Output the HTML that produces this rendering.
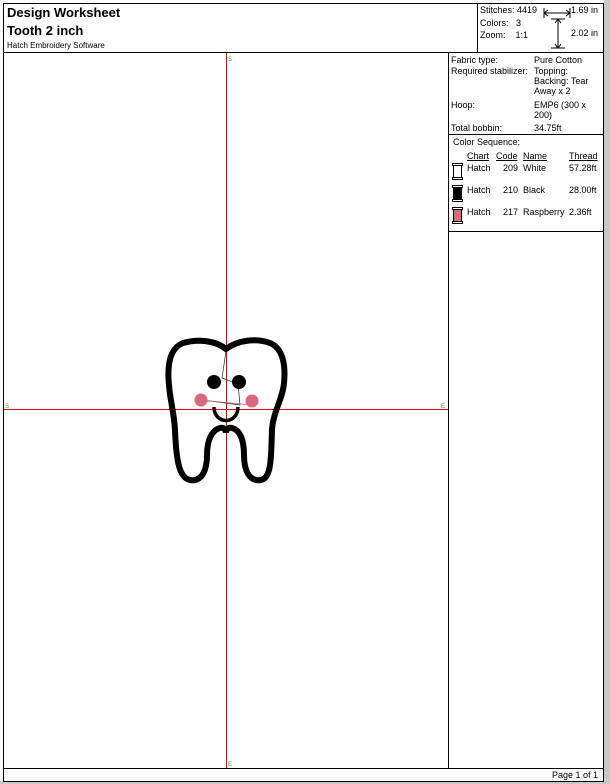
<!DOCTYPE html>
<html><head><style>
body{margin:0;width:610px;height:784px;background:#fff;font-family:"Liberation Sans",sans-serif;position:relative;overflow:hidden}
.a{position:absolute}
.t{font-size:9px;color:#000;white-space:nowrap}
</style></head><body>
<div class="a" style="left:604px;top:0;width:6px;height:784px;background:#c8c8c8"></div>
<div class="a" style="left:0;top:781px;width:610px;height:3px;background:#c8c8c8"></div>
<div class="a" style="left:3px;top:3px;width:599px;height:777px;border:1px solid #000"></div>
<div class="a" style="left:4px;top:52px;width:599px;height:1px;background:#000"></div>
<div class="a" style="left:477px;top:4px;width:1px;height:48px;background:#000"></div>
<div class="a" style="left:448px;top:53px;width:1px;height:715px;background:#000"></div>
<div class="a" style="left:449px;top:134px;width:154px;height:1px;background:#000"></div>
<div class="a" style="left:449px;top:231px;width:154px;height:1px;background:#000"></div>
<div class="a" style="left:4px;top:768px;width:599px;height:1px;background:#000"></div>
<div class="a" style="left:7px;top:5px;font-size:13px;font-weight:bold">Design Worksheet</div>
<div class="a" style="left:7px;top:23px;font-size:13px;font-weight:bold">Tooth 2 inch</div>
<div class="a t" style="left:7px;top:41px;font-size:8px">Hatch Embroidery Software</div>
<div class="a t" style="left:480px;top:5px">Stitches: 4419</div>
<div class="a t" style="left:480px;top:18px">Colors:&nbsp;&nbsp; 3</div>
<div class="a t" style="left:480px;top:30px">Zoom:&nbsp;&nbsp;&nbsp; 1:1</div>
<div class="a t" style="left:571px;top:5px">1.69 in</div>
<div class="a t" style="left:571px;top:28px">2.02 in</div>
<svg class="a" style="left:540px;top:4px" width="32" height="46"><g stroke="#000" fill="none" stroke-width="1"><path d="M4 4V14M30 4V14M4 9H30M4 9l4-3M4 9l4 3M30 9l-4-3M30 9l-4 3"/><path d="M11 15H25M11 44H25M18 15V44M18 15l-3 4M18 15l3 4M18 44l-3-4M18 44l3-4"/></g></svg>
<div class="a t" style="left:451px;top:55px">Fabric type:</div><div class="a t" style="left:534px;top:55px">Pure Cotton</div>
<div class="a t" style="left:451px;top:66px">Required stabilizer:</div>
<div class="a t" style="left:534px;top:66px;line-height:10px">Topping:<br>Backing: Tear<br>Away x 2</div>
<div class="a t" style="left:451px;top:100px">Hoop:</div>
<div class="a t" style="left:534px;top:100px;line-height:10px">EMP6 (300 x<br>200)</div>
<div class="a t" style="left:451px;top:123px">Total bobbin:</div><div class="a t" style="left:534px;top:123px">34.75ft</div>
<div class="a t" style="left:453px;top:137px">Color Sequence:</div>
<div class="a t" style="left:467px;top:151px;text-decoration:underline">Chart</div>
<div class="a t" style="left:496px;top:151px;text-decoration:underline">Code</div>
<div class="a t" style="left:523px;top:151px;text-decoration:underline">Name</div>
<div class="a t" style="left:569px;top:151px;text-decoration:underline">Thread</div>
<div class="a t" style="left:467px;top:163px">Hatch</div><div class="a t" style="left:503px;top:163px">209</div><div class="a t" style="left:523px;top:163px">White</div><div class="a t" style="left:569px;top:163px">57.28ft</div>
<div class="a t" style="left:467px;top:185px">Hatch</div><div class="a t" style="left:503px;top:185px">210</div><div class="a t" style="left:523px;top:185px">Black</div><div class="a t" style="left:569px;top:185px">28.00ft</div>
<div class="a t" style="left:467px;top:207px">Hatch</div><div class="a t" style="left:503px;top:207px">217</div><div class="a t" style="left:523px;top:207px">Raspberry</div><div class="a t" style="left:569px;top:207px">2.36ft</div>
<svg class="a" style="left:450px;top:160px" width="16" height="70"><g stroke="#000" stroke-width="1">
<rect x="2.5" y="3.5" width="10" height="2" fill="#fff"/><rect x="3.5" y="5.5" width="8" height="12" fill="#fff"/><rect x="2.5" y="17.5" width="10" height="2" fill="#fff"/>
<rect x="2.5" y="25.5" width="10" height="2" fill="#fff"/><rect x="3.5" y="27.5" width="8" height="12" fill="#000"/><rect x="2.5" y="39.5" width="10" height="2" fill="#fff"/>
<rect x="2.5" y="47.5" width="10" height="2" fill="#fff"/><rect x="3.5" y="49.5" width="8" height="12" fill="#d86a80"/><rect x="2.5" y="61.5" width="10" height="2" fill="#fff"/></g></svg>
<div class="a t" style="left:552px;top:770px">Page 1 of 1</div>
<svg class="a" style="left:0;top:0" width="448" height="768">
<line x1="226.5" y1="53" x2="226.5" y2="768" stroke="#e00000"/>
<line x1="4" y1="409.5" x2="448" y2="409.5" stroke="#e00000"/>
<text x="228" y="61" font-size="6" fill="#3a3">S</text>
<text x="5" y="408" font-size="6" fill="#3a3">S</text>
<text x="441" y="408" font-size="6" fill="#3a3">E</text>
<text x="228" y="766" font-size="6" fill="#3a3">E</text>
<path d="M226 349C215 340 197 339 183 343C170 348 167 365 169 385C170 400 174 412 175 430C176 455 178 478 190 480C202 482 207 470 207 455C207 440 212 430 220 428C224 427 226 430 226 433C226 430 228 427 232 428C240 430 244 440 244 455C244 470 249 482 261 480C272 478 271 455 272 430C273 412 283 398 284 383C286 363 282 348 270 343C256 338 238 340 226 349Z" fill="none" stroke="#000" stroke-width="6"/>
<path d="M226 351L222 378L238 384L240 405L210 401L200 401" fill="none" stroke="#222" stroke-width="0.7"/>
<path d="M210 401L252 405" stroke="#c66" stroke-width="0.7"/>
<circle cx="214" cy="382" r="7" fill="#000"/><circle cx="239" cy="382" r="7" fill="#000"/>
<circle cx="201" cy="400" r="6.5" fill="#d86a80"/><circle cx="252" cy="401" r="6.5" fill="#d86a80"/>
<path d="M214 407C214 425 238 425 238 407" fill="none" stroke="#000" stroke-width="3.5"/>
</svg>
</body></html>
